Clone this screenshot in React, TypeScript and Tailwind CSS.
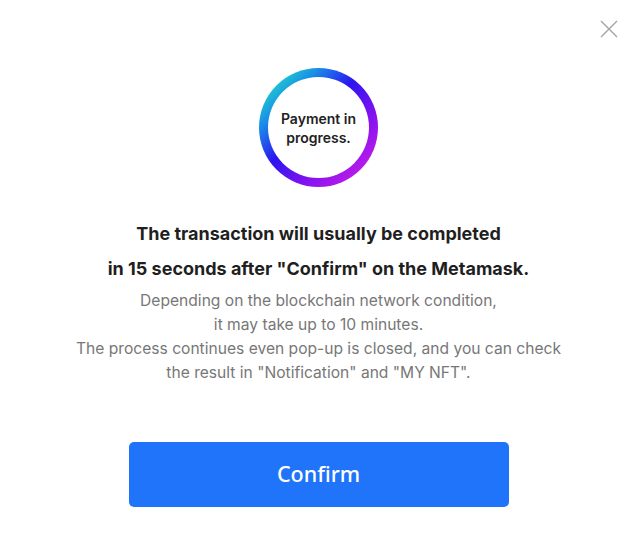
import React from "react";

export default function App() {
  return (
    <div className="relative w-[637px] h-[551px] bg-white" style={{ fontFamily: "Inter, 'Noto Sans', sans-serif" }}>
      <button className="absolute left-[599px] top-[19px] w-[20px] h-[20px]" aria-label="close">
        <svg width="20" height="20" viewBox="0 0 20 20">
          <path d="M2 2 L18 18 M18 2 L2 18" stroke="#a3a3a3" strokeWidth="1.4" fill="none" />
        </svg>
      </button>
      <div className="flex flex-col items-center pt-[68px]">
        <div className="w-[119px] h-[119px] rounded-full p-[9px] bg-[linear-gradient(135deg,#1fe0c4_8%,#1a8ee8_25%,#2a14f0_45%,#7a12f0_65%,#d41ee6_95%)]">
          <div className="w-full h-full rounded-full bg-white flex items-center justify-center text-center text-[14px] leading-[19px] font-semibold text-[#222]">
            Payment in
            <br />
            progress.
          </div>
        </div>
        <div className="mt-[29px] text-center text-[18px] leading-[35px] font-bold text-[#1f1f1f] whitespace-nowrap">
          The transaction will usually be completed
          <br />
          in 15 seconds after "Confirm" on the Metamask.
        </div>
        <div className="mt-[3px] text-center text-[15.6px] leading-[24px] text-[#777] whitespace-nowrap">
          Depending on the blockchain network condition,
          <br />
          it may take up to 10 minutes.
          <br />
          The process continues even pop-up is closed, and you can check
          <br />
          the result in "Notification" and "MY NFT".
        </div>
        <button
          className="mt-[57px] w-[380px] h-[65px] rounded-[5px] bg-[#1f74fa] text-white text-[21.5px] font-medium"
          style={{ fontFamily: "'Noto Sans', sans-serif" }}
        >
          Confirm
        </button>
      </div>
    </div>
  );
}
